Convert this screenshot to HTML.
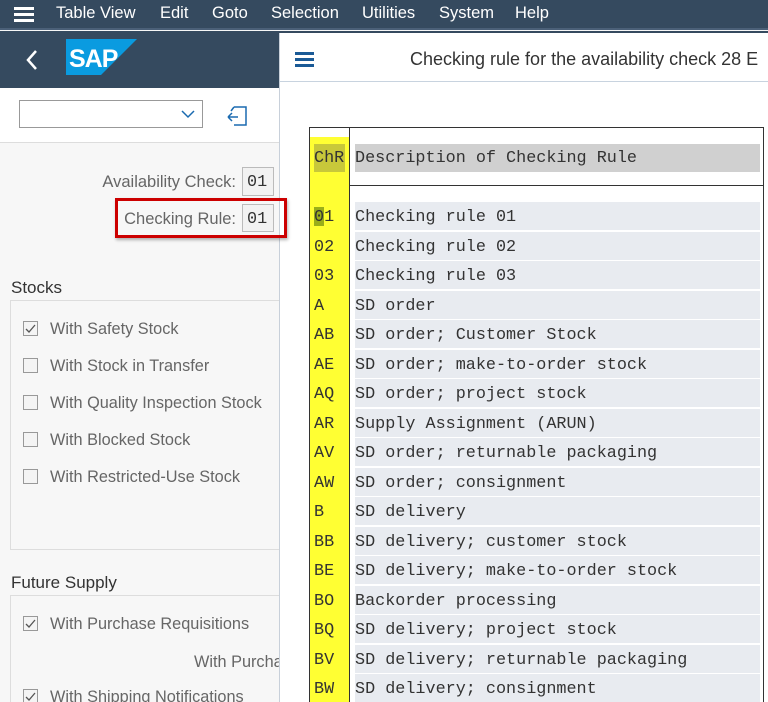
<!DOCTYPE html>
<html><head><meta charset="utf-8"><style>
*{margin:0;padding:0;box-sizing:border-box}
html{width:768px;height:702px;overflow:hidden}
body{width:768px;height:702px;overflow:hidden;position:relative;background:#f7f7f7;font-family:"Liberation Sans",Arial,sans-serif}
.a{position:absolute}
.menu{left:0;top:0;width:768px;height:30px;background:#354a5f;border-bottom:2px solid #4b6078}
.menu span{position:absolute;top:4px;color:#fff;font-size:16.5px}
.hdr{left:0;top:31px;width:768px;height:57px;background:#354a5f}
.mono{font-family:"Liberation Mono",monospace;font-size:16.8px;color:#333}
.lbl{font-size:16.5px;color:#666;text-align:right}
.cb{width:15px;height:15px;border:1px solid #999;background:#f4f4f4}
.ci{font-size:16.3px;color:#666}
.row{left:355px;width:405px;height:28px;background:#e8ebf0}
</style></head><body>
<div class="a menu">
 <div class="a" style="left:14px;top:7px;width:20px;height:3px;background:#fff"></div>
 <div class="a" style="left:14px;top:13px;width:20px;height:3px;background:#fff"></div>
 <div class="a" style="left:14px;top:19px;width:20px;height:3px;background:#fff"></div>
 <span style="left:56px">Table View</span><span style="left:160px">Edit</span><span style="left:212px">Goto</span><span style="left:271px">Selection</span><span style="left:362px">Utilities</span><span style="left:439px">System</span><span style="left:515px">Help</span>
</div>
<div class="a hdr">
 <svg class="a" style="left:24px;top:17px" width="16" height="24"><path d="M12 3 L4 12 L12 21" stroke="#fff" stroke-width="2.5" fill="none"/></svg>
 <svg class="a" style="left:66px;top:8px" width="71" height="36"><polygon points="0,0 71,0 35,36 0,36" fill="#0a9be0"/><text x="3" y="28" font-family="Liberation Sans" font-weight="bold" font-size="25" fill="#fff" letter-spacing="-1">SAP</text></svg>
</div>
<div class="a" style="left:0;top:88px;width:280px;height:55px;background:#fff;border-bottom:1px solid #ddd"></div>
<div class="a" style="left:19px;top:100px;width:184px;height:28px;border:1px solid #999;background:#fff"></div>
<svg class="a" style="left:180px;top:108px" width="16" height="12"><path d="M2 3 L8 9 L14 3" stroke="#1a6ab0" stroke-width="1.5" fill="none"/></svg>
<svg class="a" style="left:226px;top:105px" width="22" height="22"><path d="M8 2 H20 V20 H8 M8 2 L5 6" stroke="#1a6ab0" stroke-width="1.5" fill="none"/><path d="M2 12 H12 M2 12 L6 8 M2 12 L6 16" stroke="#1a6ab0" stroke-width="1.5" fill="none"/></svg>

<div class="a lbl" style="left:40px;top:173px;width:196px">Availability Check:</div>
<div class="a mono" style="left:242px;top:167px;width:32px;height:29px;border:1px solid #bbb;background:#f2f2f2;padding:5px 0 0 4px">01</div>
<div class="a lbl" style="left:40px;top:210px;width:196px">Checking Rule:</div>
<div class="a mono" style="left:242px;top:204px;width:32px;height:28px;border:1px solid #bbb;background:#f2f2f2;padding:5px 0 0 4px">01</div>

<div class="a" style="left:11px;top:278px;font-size:17px;color:#333">Stocks</div>
<div class="a" style="left:10px;top:300px;width:280px;height:250px;border:1px solid #ddd"></div>
<div class="a" style="left:11px;top:573px;font-size:17px;color:#333">Future Supply</div>
<div class="a" style="left:10px;top:595px;width:280px;height:120px;border:1px solid #ddd"></div>

<div class="a cb" style="left:23px;top:321px"></div><svg class="a" style="left:24px;top:322px" width="13" height="13"><path d="M2 7 L5 10 L11 3" stroke="#555" fill="none" stroke-width="1.3"/></svg><div class="a ci" style="left:50px;top:320px">With Safety Stock</div>
<div class="a cb" style="left:23px;top:358px"></div><div class="a ci" style="left:50px;top:357px">With Stock in Transfer</div>
<div class="a cb" style="left:23px;top:395px"></div><div class="a ci" style="left:50px;top:394px">With Quality Inspection Stock</div>
<div class="a cb" style="left:23px;top:432px"></div><div class="a ci" style="left:50px;top:431px">With Blocked Stock</div>
<div class="a cb" style="left:23px;top:469px"></div><div class="a ci" style="left:50px;top:468px">With Restricted-Use Stock</div>
<div class="a cb" style="left:23px;top:616px"></div><svg class="a" style="left:24px;top:617px" width="13" height="13"><path d="M2 7 L5 10 L11 3" stroke="#555" fill="none" stroke-width="1.3"/></svg><div class="a ci" style="left:50px;top:615px">With Purchase Requisitions</div>
<div class="a ci" style="left:194px;top:653px">With Purcha</div>
<div class="a cb" style="left:23px;top:689px"></div><svg class="a" style="left:24px;top:690px" width="13" height="13"><path d="M2 7 L5 10 L11 3" stroke="#555" fill="none" stroke-width="1.3"/></svg><div class="a ci" style="left:50px;top:688px">With Shipping Notifications</div>

<!-- popup -->
<div class="a" style="left:279px;top:33px;width:489px;height:669px;background:#fff;border-left:1px solid #c8d0da"></div>
<div class="a" style="left:280px;top:81px;width:488px;height:1px;background:#c8d3df"></div>
<div class="a" style="left:295px;top:52px;width:19px;height:3px;background:#1a5a96"></div>
<div class="a" style="left:295px;top:58px;width:19px;height:3px;background:#1a5a96"></div>
<div class="a" style="left:295px;top:64px;width:19px;height:3px;background:#1a5a96"></div>
<div class="a" style="left:410px;top:49px;font-size:18px;color:#333;white-space:nowrap">Checking rule for the availability check 28 E</div>

<div class="a" style="left:115px;top:198px;width:172px;height:40px;border:3px solid #c00;box-shadow:1px 2px 3px rgba(0,0,0,.3);z-index:5"></div>

<div class="a" style="left:309px;top:127px;width:455px;height:580px;border:1px solid #333;border-bottom:none"></div>
<div class="a" style="left:309px;top:185px;width:455px;height:1px;background:#333"></div>
<div class="a" style="left:310px;top:137px;width:40px;height:570px;background:#ffff33"></div>
<div class="a" style="left:349px;top:127px;width:1px;height:580px;background:#333"></div>
<div class="a" style="left:314px;top:144px;width:31px;height:28px;background:#c8c83a"></div>
<div class="a mono" style="left:314px;top:149px">ChR</div>
<div class="a" style="left:355px;top:144px;width:405px;height:28px;background:#d0d0d0"></div>
<div class="a mono" style="left:355px;top:149px">Description of Checking Rule</div>
<div class="a" style="left:314px;top:207px;width:10px;height:19px;background:#9aae1a"></div>

<div id="rows"></div>
<script>
var d=[["01","Checking rule 01"],["02","Checking rule 02"],["03","Checking rule 03"],["A","SD order"],["AB","SD order; Customer Stock"],["AE","SD order; make-to-order stock"],["AQ","SD order; project stock"],["AR","Supply Assignment (ARUN)"],["AV","SD order; returnable packaging"],["AW","SD order; consignment"],["B","SD delivery"],["BB","SD delivery; customer stock"],["BE","SD delivery; make-to-order stock"],["BO","Backorder processing"],["BQ","SD delivery; project stock"],["BV","SD delivery; returnable packaging"],["BW","SD delivery; consignment"]];
var h="";for(var i=0;i<d.length;i++){var t=202+i*29.5;
h+='<div class="a row" style="top:'+t+'px"></div><div class="a mono" style="left:314px;top:'+(t+6)+'px">'+d[i][0]+'</div><div class="a mono" style="left:355px;top:'+(t+6)+'px">'+d[i][1]+'</div>';}
document.getElementById("rows").innerHTML=h;
</script>
</body></html>
